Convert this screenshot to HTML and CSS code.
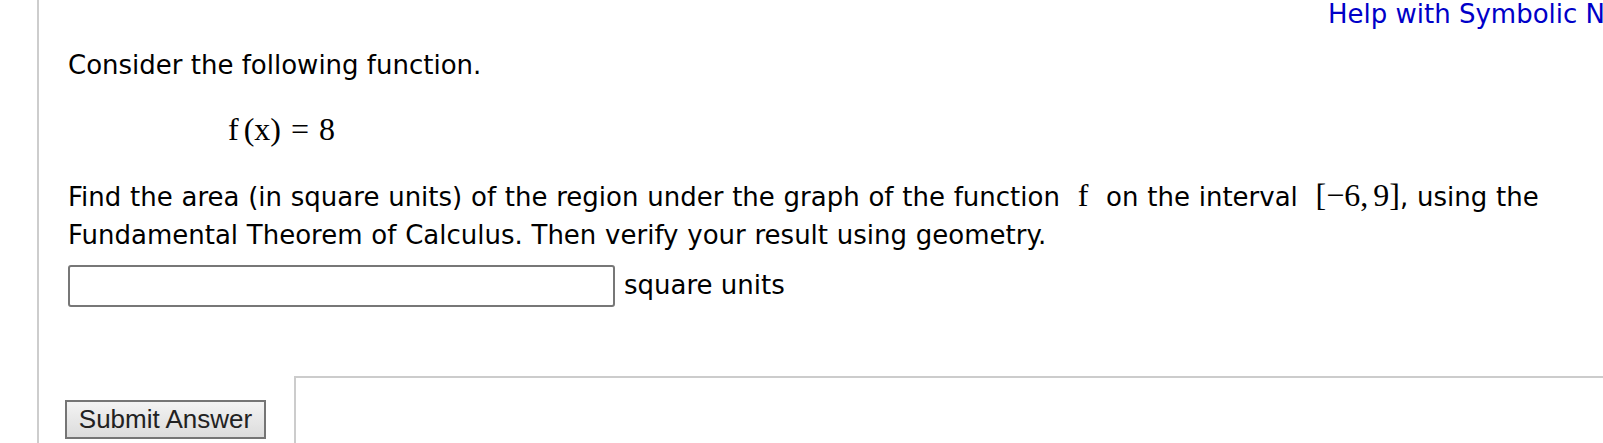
FILE: index.html
```html
<!DOCTYPE html>
<html lang="en">
<head>
<meta charset="utf-8">
<title>Question</title>
<link rel="stylesheet" href="styles.css">
</head>
<body>
<div class="page">
  <main class="main">
    <div class="help-row"><a class="help" href="#">Help with Symbolic Notation</a></div>
    <p class="intro">Consider the following function.</p>
    <div class="equation"><span class="fn">f</span><span>(x)</span><span class="rel">=</span><span>8</span></div>
    <p class="question">Find the area (in square units) of the region under the graph of the function <span class="math">f</span> on the interval <span class="math interval">[−6,<span class="comma-gap"></span>9]</span>, using the Fundamental Theorem of Calculus. Then verify your result using geometry.</p>
    <div class="answer-row">
      <input class="answer" type="text" aria-label="answer">
      <span class="units">square units</span>
    </div>
    <div class="submit-row">
      <button class="submit" type="button">Submit Answer</button>
      <div class="feedback"></div>
    </div>
  </main>
</div>
</body>
</html>
```
FILE: styles.css
```css
html, body {
  margin: 0;
  padding: 0;
  background: #fff;
}
body {
  overflow: hidden;
  font-family: "DejaVu Sans", Verdana, sans-serif;
  color: #000;
  width: 1603px;
  height: 443px;
}
.page {
  padding-left: 37px;
  height: 443px;
}
.main {
  border-left: 2px solid #cdcdcd;
  height: 443px;
  padding-left: 29px;
  overflow: hidden;
}
.help-row {
  padding-left: 1260px;
  white-space: nowrap;
  height: 28px;
  font-size: 26px;
  line-height: 28px;
}
.help {
  color: #0000c8;
  text-decoration: none;
}
.intro {
  margin: 22px 0 0;
  font-size: 26px;
  line-height: 30px;
}
.equation {
  margin-top: 31px;
  padding-left: 160px;
  font-family: "Liberation Serif", "Times New Roman", serif;
  font-size: 32px;
  line-height: 36px;
  white-space: nowrap;
}
.equation .fn {
  margin-right: 5px;
}
.equation .rel {
  margin: 0 10px;
}
.question {
  margin: 31px 0 0;
  width: 1500px;
  font-size: 26px;
  line-height: 38px;
  word-spacing: 0.5px;
}
.math {
  font-family: "Liberation Serif", "Times New Roman", serif;
  font-size: 32px;
  line-height: 1;
  margin: 0 9px;
  word-spacing: 0;
}
.math.interval {
  margin-right: 0;
}
.comma-gap {
  display: inline-block;
  width: 5px;
}
.answer-row {
  margin-top: 11px;
  display: flex;
  align-items: flex-start;
}
.answer {
  box-sizing: border-box;
  width: 547px;
  height: 42px;
  margin: 0;
  border: 2px solid #777;
  border-radius: 3px;
  background: #fff;
  font-size: 24px;
}
.units {
  margin-left: 9px;
  margin-top: 5px;
  font-size: 26px;
  line-height: 30px;
}
.submit-row {
  margin-top: 69px;
  display: flex;
  align-items: flex-start;
}
.submit {
  box-sizing: border-box;
  margin: 24px 0 0 -3px;
  width: 201px;
  height: 39px;
  padding: 0;
  border: 2px solid #757575;
  border-radius: 0;
  background: linear-gradient(#f3f3f3, #dcdcdc);
  font-family: "Liberation Sans", Arial, sans-serif;
  font-size: 26px;
  line-height: 33px;
  color: #222;
}
.feedback {
  flex: 1;
  margin-left: 28px;
  height: 90px;
  border-top: 2px solid #cccccc;
  border-left: 2px solid #cccccc;
}
```
